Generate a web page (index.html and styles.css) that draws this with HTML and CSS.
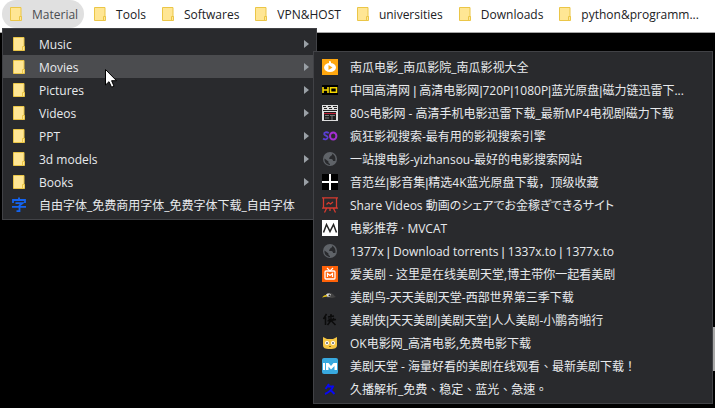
FILE: index.html
```html
<!DOCTYPE html>
<html lang="zh-CN">
<head>
    <meta charset="utf-8">
    <title>Bookmarks</title>
    <link rel="stylesheet" href="styles.css">
</head>
<body>
    <svg class="sprite" aria-hidden="true">
        <symbol id="folder" viewBox="0 0 16 16">
            <path d="M2.5 1.5h10.500v9h.500v4h-11z" fill="#ffe694" stroke="#ebc647"/>
            <path d="M11.500 14v-3.500h2" fill="none" stroke="#ebc647"/>
        </symbol>
        <symbol id="globe" viewBox="0 0 16 16">
            <circle cx="8" cy="8" r="7" fill="#5f6368"/>
            <path d="M9.500 2.300C11 3 10 4.500 8.700 5c-.8.300-.2 1.200-1.200 1.500-.8.300-.5 1.500.5 1.500 2.500 0 3 .6 3 2h2.300c.6-2.500 0-6-3.800-7.700zM2.500 7.500l4 3v1.500l1.500 1v1C4.500 13.700 2 11 2.500 7.500z" fill="#292a2d"/>
        </symbol>
    </svg>

    <nav class="bookmarks">
        <button class="bookmark active" type="button"><svg class="icon"><use href="#folder"/></svg>Material</button>
        <button class="bookmark" type="button"><svg class="icon"><use href="#folder"/></svg>Tools</button>
        <button class="bookmark" type="button"><svg class="icon"><use href="#folder"/></svg>Softwares</button>
        <button class="bookmark" type="button"><svg class="icon"><use href="#folder"/></svg>VPN&amp;HOST</button>
        <button class="bookmark" type="button"><svg class="icon"><use href="#folder"/></svg>universities</button>
        <button class="bookmark" type="button"><svg class="icon"><use href="#folder"/></svg>Downloads</button>
        <button class="bookmark" type="button"><svg class="icon"><use href="#folder"/></svg>python&amp;programm...</button>
        <button class="bookmark" type="button" aria-label="More"><svg class="icon"><use href="#folder"/></svg></button>
    </nav>

    <ul class="menu main-menu">
        <li><button class="item parent" type="button"><svg class="icon"><use href="#folder"/></svg><span class="label">Music</span></button></li>
        <li class="open">
            <button class="item parent" type="button"><svg class="icon"><use href="#folder"/></svg><span class="label">Movies</span></button>
            <ul class="menu sub-menu">
                <li><a class="item" href="#"><svg class="icon" viewBox="0 0 16 16"><rect width="16" height="16" fill="#ffa70f"/><path d="M7 2l2 .5V5H7z" fill="#fff"/><ellipse cx="8" cy="8.500" rx="6" ry="4.500" fill="#fff"/><path d="M6.500 6l4 2.500-4 2.500z" fill="#ffa70f"/></svg><span class="label">南瓜电影_南瓜影院_南瓜影视大全</span></a></li>
                <li><a class="item" href="#"><svg class="icon" viewBox="0 0 16 16"><rect y="3" width="16" height="10" fill="#000"/><path d="M1 5v6M6 5v6M1 8h5M8.500 5.800h6v4.400h-6z" fill="none" stroke="#f5d800" stroke-width="1.600"/></svg><span class="label">中国高清网 <span class="bar">|</span> 高清电影网<span class="bar">|</span>720P<span class="bar">|</span>1080P<span class="bar">|</span>蓝光原盘<span class="bar">|</span>磁力链迅雷下...</span></a></li>
                <li><a class="item" href="#"><svg class="icon" viewBox="0 0 16 16"><rect width="16" height="16" fill="#ddd"/><path d="M1 1.500h3M6 1.500h3M11 1.500h4M2 3.500h3M7 3.500h3M12 3.500h3M1 5.500h14" stroke="#222"/><rect x="2" y="7" width="12" height="8" fill="#1c1c1c"/><path d="M2 8.500h12" stroke="#c02038"/><path d="M3 10.500h4M8 10.500h5M3 13h4M10 11v4" stroke="#777"/></svg><span class="label">80s电影网 - 高清手机电影迅雷下载_最新MP4电视剧磁力下载</span></a></li>
                <li><a class="item" href="#"><svg class="icon" viewBox="0 0 16 16"><path d="M6.800 5C4.500 3.500 1.800 4.500 2.200 6.300c.4 1.600 3.800 1.200 3.500 3.400-.3 1.800-3 2.300-4.600.8" fill="none" stroke="#5a3fd6" stroke-width="1.800"/><ellipse cx="11.200" cy="8" rx="3.200" ry="3.500" fill="none" stroke="#a32fd0" stroke-width="2"/></svg><span class="label">疯狂影视搜索-最有用的影视搜索引擎</span></a></li>
                <li><a class="item" href="#"><svg class="icon"><use href="#globe"/></svg><span class="label">一站搜电影-yizhansou-最好的电影搜索网站</span></a></li>
                <li><a class="item" href="#"><svg class="icon" viewBox="0 0 16 16"><rect width="16" height="16" fill="#000"/><path d="M8 0v16M0 8h16" stroke="#fff" stroke-width="2"/></svg><span class="label">音范丝<span class="bar">|</span>影音集<span class="bar">|</span>精选4K蓝光原盘下载，顶级收藏</span></a></li>
                <li lang="ja"><a class="item" href="#"><svg class="icon" viewBox="0 0 16 16"><path d="M0 .8h16M1.500 1v10h13V1M4.500 7.500l2-2 2 1.500 2.500-2M8 11v3M4.500 11.500l-2 4M11.500 11.500l2 4M0 11.200h16" fill="none" stroke="#d63b2f" stroke-width="1.300"/></svg><span class="label">Share Videos 動画のシェアでお金稼ぎできるサイト</span></a></li>
                <li><a class="item" href="#"><svg class="icon" viewBox="0 0 16 16"><rect width="16" height="16" fill="#fff"/><path d="M1.500 12.500l3-8 3.500 7 3.500-7 3 8" fill="none" stroke="#222" stroke-width="1.500"/></svg><span class="label">电影推荐 · MVCAT</span></a></li>
                <li><a class="item" href="#"><svg class="icon"><use href="#globe"/></svg><span class="label">1377x <span class="bar">|</span> Download torrents <span class="bar">|</span> 1337x.to <span class="bar">|</span> 1377x.to</span></a></li>
                <li><a class="item" href="#"><svg class="icon" viewBox="0 0 16 16"><rect width="16" height="16" fill="#ff6208"/><rect x="3" y="5" width="10" height="8" rx="1" fill="none" stroke="#fff" stroke-width="1.300"/><path d="M5 2l3 3 3-3M5.500 11V7.500l2.500 2 2.500-2V11" fill="none" stroke="#fff" stroke-width="1.200"/></svg><span class="label">爱美剧 - 这里是在线美剧天堂,博主带你一起看美剧</span></a></li>
                <li><a class="item" href="#"><svg class="icon" viewBox="0 0 16 16"><path d="M4 7c1-3 4-4 6-2.500C12 5.500 12 7 14 8l-4 1-5-.5z" fill="#444"/><path d="M4 5.500C5 4 8 4 9 5.500L8 8 5 7.500z" fill="#ddd"/><circle cx="7.500" cy="6.500" r="1" fill="#222"/><path d="M0 8.500C1 7 3 5.500 5 6v1.500z" fill="#e4c21e"/></svg><span class="label">美剧鸟-天天美剧天堂-西部世界第三季下载</span></a></li>
                <li><a class="item" href="#"><svg class="icon" viewBox="0 0 16 16"><path d="M4.500 2L1.500 7M3.500 5v8M6 5l6-1M9 2v6M6.500 6.500L8 8M12 6l-1.500 2M5.500 9L14 7.500M9 8.500L5.500 13M9.500 9l4 4" fill="none" stroke="#0b0b0b" stroke-width="1.500"/></svg><span class="label">美剧侠<span class="bar">|</span>天天美剧<span class="bar">|</span>美剧天堂<span class="bar">|</span>人人美剧-小鹏奇啪行</span></a></li>
                <li><a class="item" href="#"><svg class="icon" viewBox="0 0 16 16"><path d="M1 2l4 2h6l4-2v8c0 3-2 4-7 4s-7-1-7-4z" fill="#f5c543"/><circle cx="5" cy="8" r="2" fill="#fff"/><circle cx="11" cy="8" r="2" fill="#fff"/><circle cx="5" cy="8" r="1" fill="#666"/><circle cx="11" cy="8" r="1" fill="#666"/><path d="M7 11l1 1 1-1" fill="none" stroke="#8c6418"/></svg><span class="label">OK电影网_高清电影,免费电影下载</span></a></li>
                <li lang="zh-TW"><a class="item" href="#"><svg class="icon" viewBox="0 0 16 16"><rect width="16" height="16" rx="2" fill="#38a9df"/><path d="M1 5h2v7H1zM4 12V5h2.500L9 8l2.500-3H15v7h-2.500V8L9 11.500 6.500 8.500V12z" fill="#fff"/></svg><span class="label">美剧天堂 - 海量好看的美剧在线观看、最新美剧下载！</span></a></li>
                <li lang="zh-TW"><a class="item" href="#"><svg class="icon" viewBox="0 0 16 16"><path d="M7 3L3.500 8M6 5.500h5.500M11.500 4.500C10 8.500 7 11.500 3 13M8 8.500l4.500 4.500" fill="none" stroke="#0808f5" stroke-width="2"/></svg><span class="label">久播解析_免费、稳定、蓝光、急速。</span></a></li>
            </ul>
        </li>
        <li><button class="item parent" type="button"><svg class="icon"><use href="#folder"/></svg><span class="label">Pictures</span></button></li>
        <li><button class="item parent" type="button"><svg class="icon"><use href="#folder"/></svg><span class="label">Videos</span></button></li>
        <li><button class="item parent" type="button"><svg class="icon"><use href="#folder"/></svg><span class="label">PPT</span></button></li>
        <li><button class="item parent" type="button"><svg class="icon"><use href="#folder"/></svg><span class="label">3d models</span></button></li>
        <li><button class="item parent" type="button"><svg class="icon"><use href="#folder"/></svg><span class="label">Books</span></button></li>
        <li><a class="item" href="#"><svg class="icon" viewBox="0 0 16 16"><path d="M8 .5v2.500M2 6V3h12v3M4.500 6.200h7L8.500 8.500v5.700H5.500M1 9.800h14" fill="none" stroke="#1464f0" stroke-width="1.800"/></svg><span class="label">自由字体_免费商用字体_免费字体下载_自由字体</span></a></li>
    </ul>

    <div class="scroll-thumb"></div>
    <svg class="cursor" viewBox="0 0 12 19"><path d="M.5 .5v15.500l3.500-3.300 2.500 5.500 2.500-1-2.400-5.500h4.900z" fill="#fff" stroke="#000"/></svg>
</body>
</html>
```
FILE: styles.css
```css
body {
    margin: 0;
    min-height: 100vh;
    background-color: #000;
    overflow: hidden;
    font-family: "Open Sans", "Noto Sans CJK SC", sans-serif;
    font-size: 12px;
}

.sprite {
    position: absolute;
    width: 0;
    height: 0;
}

.icon {
    width: 16px;
    height: 16px;
    flex-shrink: 0;
}

button {
    border: 0;
    background: none;
    font: inherit;
}

.bookmarks {
    display: flex;
    gap: 2px;
    height: 32px;
    padding-left: 2px;
    background-color: #fff;
    border-bottom: 1px solid #a6a6a6;
    overflow: hidden;
}

.bookmark {
    display: flex;
    align-items: center;
    flex-shrink: 0;
    gap: 8px;
    height: 28px;
    padding: 0 6px;
    border-radius: 14px;
    color: #202124;
    white-space: nowrap;
}

.bookmark.active {
    background-color: #e0e0e0;
    color: #4a4d51;
}

.menu {
    position: absolute;
    box-sizing: border-box;
    margin: 0;
    padding: 3px 0;
    border: 1px solid #414246;
    background-color: #292a2d;
    list-style: none;
}

.main-menu {
    top: 28px;
    left: 2px;
    width: 315px;
}

.sub-menu {
    top: -4px;
    left: 310px;
    width: 400px;
}

.open {
    position: relative;
}

.open > .parent {
    background-color: #4b4c4f;
}

.item {
    display: flex;
    align-items: center;
    gap: 12px;
    box-sizing: border-box;
    width: 100%;
    height: 23px;
    padding: 0 7px 0 8px;
    color: #e8eaed;
    text-decoration: none;
    white-space: nowrap;
}

.label {
    padding-top: 3px;
    line-height: 20px;
}

/* a slimmer separator than the text font has */
.bar {
    font-family: "Liberation Sans", sans-serif;
}

.parent::after {
    content: "";
    margin-left: auto;
    border: 4px solid transparent;
    border-left: 5px solid #9aa0a6;
    border-right: 0;
}

:lang(ja) {
    font-family: "Open Sans", "Noto Sans CJK JP", sans-serif;
    font-feature-settings: "palt";
}

:lang(zh-TW) {
    font-family: "Open Sans", "Noto Sans CJK TC", sans-serif;
}

.scroll-thumb {
    position: absolute;
    top: 327px;
    right: 0;
    width: 2px;
    height: 44px;
    background-color: #a8a8a8;
}

.cursor {
    position: absolute;
    top: 69px;
    left: 105px;
    width: 12px;
    height: 19px;
}
```
